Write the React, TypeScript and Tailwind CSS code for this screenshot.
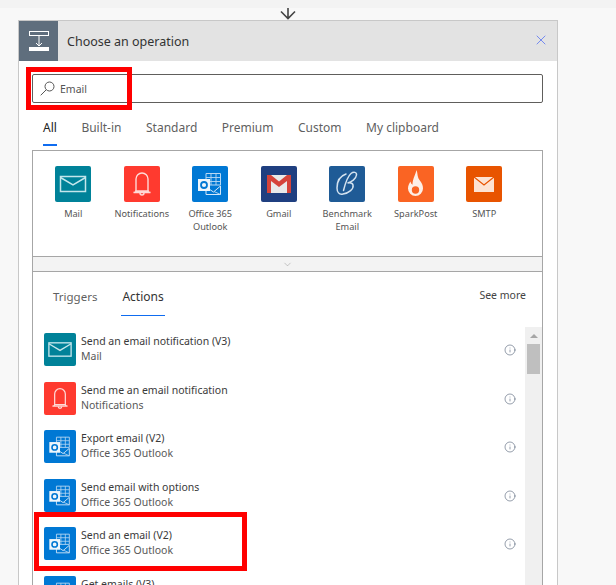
import React from 'react';
import { ChevronDown, Info, X } from 'lucide-react';

type IconKind = 'mail' | 'bell' | 'outlook' | 'gmail' | 'benchmark' | 'sparkpost' | 'smtp';

const connectors: { name: string; icon: IconKind }[] = [
  { name: 'Mail', icon: 'mail' },
  { name: 'Notifications', icon: 'bell' },
  { name: 'Office 365 Outlook', icon: 'outlook' },
  { name: 'Gmail', icon: 'gmail' },
  { name: 'Benchmark Email', icon: 'benchmark' },
  { name: 'SparkPost', icon: 'sparkpost' },
  { name: 'SMTP', icon: 'smtp' },
];

const actions: { title: string; subtitle: string; icon: IconKind }[] = [
  { title: 'Send an email notification (V3)', subtitle: 'Mail', icon: 'mail' },
  { title: 'Send me an email notification', subtitle: 'Notifications', icon: 'bell' },
  { title: 'Export email (V2)', subtitle: 'Office 365 Outlook', icon: 'outlook' },
  { title: 'Send email with options', subtitle: 'Office 365 Outlook', icon: 'outlook' },
  { title: 'Send an email (V2)', subtitle: 'Office 365 Outlook', icon: 'outlook' },
  { title: 'Get emails (V3)', subtitle: 'Office 365 Outlook', icon: 'outlook' },
];

const tabs = ['All', 'Built-in', 'Standard', 'Premium', 'Custom', 'My clipboard'];

const iconBg: Record<IconKind, string> = {
  mail: 'bg-[#008299]',
  bell: 'bg-[#ff3a2f]',
  outlook: 'bg-[#0078d4]',
  gmail: 'bg-[#1f3f80]',
  benchmark: 'bg-[#1f5b96]',
  sparkpost: 'bg-[#fa6423]',
  smtp: 'bg-[#e85400]',
};

function Glyph({ kind }: { kind: IconKind }) {
  if (kind === 'mail') {
    return (
      <svg viewBox="0 0 36 36" className="h-full w-full" fill="none" stroke="#c4e6ec" strokeWidth="1.5">
        <rect x="5.500" y="10.500" width="25" height="15" />
        <path d="M5.500 11.500l12.500 7.500 12.500-7.500" />
      </svg>
    );
  }
  if (kind === 'bell') {
    return (
      <svg viewBox="0 0 36 36" className="h-full w-full" fill="none" stroke="#ffd9d6" strokeWidth="1.4">
        <path d="M12 25V13a6 6 0 0 1 12 0v12" />
        <path d="M9.500 26.500c1.700-.3 2.500-.9 2.500-1.500h12c0 .6.800 1.200 2.500 1.500z" />
        <path d="M16 27a2 2 0 0 0 4 0" />
      </svg>
    );
  }
  if (kind === 'outlook') {
    return (
      <svg viewBox="0 0 36 36" className="h-full w-full">
        <path d="M14 7.500h14.500V19H14z" fill="none" stroke="#b8d8f3" strokeWidth="1" />
        <path d="M14 11.500h14.500M14 15.500h14.500M19 7.500V19M24 7.500V19" stroke="#b8d8f3" strokeWidth="0.9" />
        <path d="M14 21l7.500 5 7-6v8.500H14z" fill="none" stroke="#d4e7f8" strokeWidth="1" />
        <path d="M22 25.500l6.500 3" stroke="#b8d8f3" strokeWidth="0.9" />
        <rect x="6" y="13" width="12" height="12" fill="#eef6fc" />
        <circle cx="12" cy="19" r="3" fill="none" stroke="#0078d4" strokeWidth="1.8" />
      </svg>
    );
  }
  if (kind === 'gmail') {
    return (
      <svg viewBox="0 0 36 36" className="h-full w-full">
        <rect x="6" y="9" width="24" height="18" fill="#e9e9e9" />
        <path d="M6 9h4l8 6.500L26 9h4v18h-4V15l-8 6-8-6v12H6z" fill="#d5433a" />
      </svg>
    );
  }
  if (kind === 'benchmark') {
    return (
      <svg viewBox="0 0 36 36" className="h-full w-full" fill="none" stroke="#d3e2ef" strokeWidth="1.5" strokeLinecap="round">
        <path d="M17 8c-6 2-9 7-9 14 0 4 2 7 6 6 6-1 11-5 10-9-.5-2-3-2.500-5.500-2 4-1 8.500-4 9-8 .4-3-3-3.500-5.500-1.500-3 2.500-5.500 9-7.500 17" />
      </svg>
    );
  }
  if (kind === 'sparkpost') {
    return (
      <svg viewBox="0 0 36 36" className="h-full w-full">
        <path
          d="M18.500 4c1.500 4 .5 6.500 3 10 2.500 3 3.500 5.500 3.500 8.500a7.500 7.500 0 0 1-15 0c0-3 1.200-5 2.500-7 .3 1.500.8 2.500 2 3.200C14.500 13 17.500 9 18.500 4z"
          fill="#fdeee6"
        />
        <circle cx="17.500" cy="24" r="3.700" fill="#fa6423" />
      </svg>
    );
  }
  return (
    <svg viewBox="0 0 36 36" className="h-full w-full">
      <rect x="8" y="11" width="20" height="15" fill="#fde3d3" />
      <path d="M8 11l10 8 10-8" fill="none" stroke="#e85400" strokeWidth="1.2" />
    </svg>
  );
}

function ConnectorIcon({ kind, className }: { kind: IconKind; className: string }) {
  return (
    <div className={`shrink-0 overflow-hidden rounded-[2px] ${iconBg[kind]} ${className}`}>
      <Glyph kind={kind} />
    </div>
  );
}

export default function App() {
  return (
    <div className="relative h-[585px] w-[616px] overflow-hidden bg-[#f8f8f8] font-['Noto_Sans',sans-serif] text-[#333333]">
      <div className="h-2 bg-[#f3f3f3]" />

      {/* connector arrow above the card */}
      <div className="ml-[18px] flex h-3 w-[540px] justify-center">
        <svg viewBox="0 0 18 12" className="h-3 w-[18px]" fill="none" stroke="#444444" strokeWidth="1.6">
          <path d="M9 0v10.500M2 3.500l7 7 7-7" />
        </svg>
      </div>

      <div className="ml-[18px] w-[540px] border border-b-0 border-[#c8c8c8] bg-white">
        <div className="flex h-10 items-center bg-[#e3e3e3]">
          <div className="flex h-10 w-[39px] items-center justify-center bg-[#5f6e7d]">
            <svg viewBox="0 0 20 20" className="h-5 w-5" fill="none" stroke="#ffffff" strokeWidth="1">
              <rect x="0.500" y="0.500" width="19" height="4" />
              <path d="M10 5v10M7 12l3 3 3-3" />
              <rect x="0" y="16" width="20" height="4" fill="#ffffff" stroke="none" />
            </svg>
          </div>
          <span className="ml-[9px] mt-[2px] flex-1 text-[12.500px] text-[#333333]">Choose an operation</span>
          <X size={16} strokeWidth={1} className="mb-[3px] mr-[8px] text-[#3d5cf5]" />
        </div>

        <div className="px-[13px] pt-[13px]">
          <div className="flex h-[29px] w-[511px] items-center rounded-[2px] border border-[#605e5c] pl-[7px]">
            <svg viewBox="0 0 15 15" className="h-[15px] w-[15px]" fill="none" stroke="#555555" strokeWidth="1">
              <circle cx="9.500" cy="5.500" r="4.500" />
              <path d="M6.300 8.700L0.700 14.300" />
            </svg>
            <span className="ml-[5px] mt-[2px] text-[10.500px] text-[#555555]">Email</span>
          </div>

          <div className="mt-[11px] flex h-[36px] gap-[24.500px] pl-[11px]">
            {tabs.map((tab, i) => (
              <div key={tab} className="relative h-[36px]">
                <span className={`text-[12px] ${i === 0 ? 'text-[#222222]' : 'text-[#5f5f5f]'}`}>{tab}</span>
                {i === 0 && <div className="absolute bottom-[4px] left-0 h-[2px] w-full bg-[#0f6cf0]" />}
              </div>
            ))}
          </div>

          <div className="w-[511px] border border-b-0 border-[#a6a6a6]">
            <div className="flex h-[105px] pl-[6px] pt-[15px]">
              {connectors.map((c) => (
                <div key={c.name} className="flex w-[68.500px] flex-col items-center">
                  <ConnectorIcon kind={c.icon} className="h-9 w-9" />
                  <span className="mt-[5px] w-[68px] text-center text-[9.200px] leading-[13px] text-[#555555]">{c.name}</span>
                </div>
              ))}
            </div>

            <div className="flex h-4 items-center justify-center border-y border-[#a6a6a6] bg-[#f3f3f3]">
              <ChevronDown size={11} strokeWidth={1} className="text-[#8a8a8a]" />
            </div>

            <div className="relative flex h-[55px] pl-5">
              <span className="mt-[16px] text-[11.500px] text-[#5f5f5f]">Triggers</span>
              <div className="relative ml-[25px]">
                <span className="mt-[16px] block text-[12px] text-[#333333]">Actions</span>
                <div className="absolute left-[-1px] right-[-1px] top-[43px] h-[1px] bg-[#0f6cf0]" />
              </div>
              <span className="ml-auto mr-4 mt-[16px] text-[10.500px] text-[#444444]">See more</span>
            </div>

            <div className="flex">
              <div className="flex-1 pl-[11px] pt-[6px]">
                {actions.map((a) => (
                  <div key={a.title + a.subtitle} className="flex h-[48.500px] items-start">
                    <ConnectorIcon kind={a.icon} className="h-[33px] w-[32px]" />
                    <div className="ml-[5px] mt-[1px] flex flex-col text-[10.500px] leading-[15px]">
                      <span className="text-[#3a3a3a]">{a.title}</span>
                      <span className="text-[#585858]">{a.subtitle}</span>
                    </div>
                    <Info size={12} strokeWidth={1.1} className="ml-auto mr-[9px] mt-[11px] text-[#3f4f66]" />
                  </div>
                ))}
              </div>
              <div className="flex h-[300px] w-[17px] flex-col items-center bg-[#f0f0f0] pt-[7px]">
                <div className="h-0 w-0 border-x-[4px] border-b-[4px] border-x-transparent border-b-[#a6a6a6]" />
                <div className="mt-[6px] h-[30px] w-[13px] bg-[#bfbfbf]" />
              </div>
            </div>
          </div>
        </div>
      </div>

      {/* red annotation boxes */}
      <div className="absolute left-[26px] top-[67px] h-[43px] w-[106px] border-[5px] border-[#ff0000]" />
      <div className="absolute left-[34px] top-[512px] h-[59px] w-[213px] border-[5px] border-[#ff0000]" />
    </div>
  );
}
